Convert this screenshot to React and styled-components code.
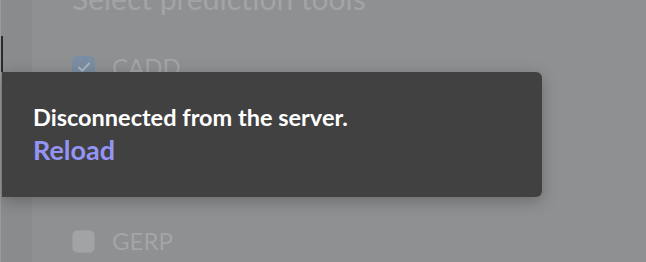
import styled, { createGlobalStyle } from 'styled-components';

const tools = [
    { name: "CADD", checked: true },
    { name: "DANN", checked: false },
    { name: "FATHMM", checked: false },
    { name: "GERP", checked: false },
];

const GlobalStyle = createGlobalStyle`
    html, body {
        margin: 0;
        padding: 0;
        width: 646px;
        height: 262px;
        overflow: hidden;
        background: #8e8f91;
        font-family: Lato, "Noto Sans", sans-serif;
    }
`;

function Check() {
    return (
        <svg width="16" height="16" viewBox="0 0 16 16" fill="none">
            <path d="M3 8.5l3.2 3.2L13 4.5" stroke="#a9b4c2" strokeWidth="2" strokeLinecap="round" strokeLinejoin="round" />
        </svg>
    );
}

function App() {
    return (
        <Page>
            <GlobalStyle />
            <Side>
                <span className="mark" />
            </Side>
            <Panel>
                <Title>Select prediction tools</Title>
                <List>
                    {tools.map((tool) => (
                        <Row key={tool.name}>
                            <Box $checked={tool.checked}>{tool.checked && <Check />}</Box>
                            <Label>{tool.name}</Label>
                        </Row>
                    ))}
                </List>
            </Panel>
            <Toast>
                <Message>Disconnected from the server.</Message>
                <ReloadLink href="#">Reload</ReloadLink>
            </Toast>
        </Page>
    );
}

const Page = styled.div`
    position: relative;
    display: flex;
    width: 646px;
    height: 262px;
    overflow: hidden;
`;

const Side = styled.div`
    width: 31px;
    border-left: 1px solid #9b9c9e;
    background: #8a8b8d;
    .mark {
        display: block;
        width: 2px;
        height: 36px;
        margin-top: 36px;
        background: #2a2a2a;
    }
`;

const Panel = styled.div`
    flex: 1;
    background: #8f9092;
    padding: 0 0 0 40px;
    margin-top: -20px;
`;

const Title = styled.h2`
    margin: 0;
    font-size: 30px;
    font-weight: 400;
    line-height: 36px;
    color: #a3a4a6;
`;

const List = styled.ul`
    list-style: none;
    margin: 0;
    padding: 0;
    margin-top: 39px;
    display: flex;
    flex-direction: column;
    gap: 34px;
`;

const Row = styled.li`
    display: flex;
    align-items: center;
    gap: 17px;
    height: 24px;
`;

const Box = styled.span`
    width: 23px;
    height: 23px;
    box-sizing: border-box;
    border-radius: 5px;
    display: flex;
    align-items: center;
    justify-content: center;
    background: ${(p) => (p.$checked ? '#7b8da3' : '#a2a3a4')};
    border: 1px solid ${(p) => (p.$checked ? '#7b8da3' : '#9a9b9c')};
`;

const Label = styled.span`
    font-size: 24px;
    line-height: 24px;
    color: #a4a5a7;
`;

const Toast = styled.div`
    position: absolute;
    left: 2px;
    top: 72px;
    width: 540px;
    height: 125px;
    box-sizing: border-box;
    padding: 31px 31px 0;
    background: #414141;
    border-radius: 0 6px 6px 0;
    box-shadow: 0 4px 16px rgba(0, 0, 0, 0.25);
    display: flex;
    flex-direction: column;
    align-items: flex-start;
`;

const Message = styled.div`
    font-size: 23.5px;
    font-weight: 700;
    line-height: 28px;
    color: #ffffff;
`;

const ReloadLink = styled.a`
    font-size: 27px;
    font-weight: 700;
    line-height: 37px;
    color: #9494f4;
    text-decoration: none;
`;

export default App;
